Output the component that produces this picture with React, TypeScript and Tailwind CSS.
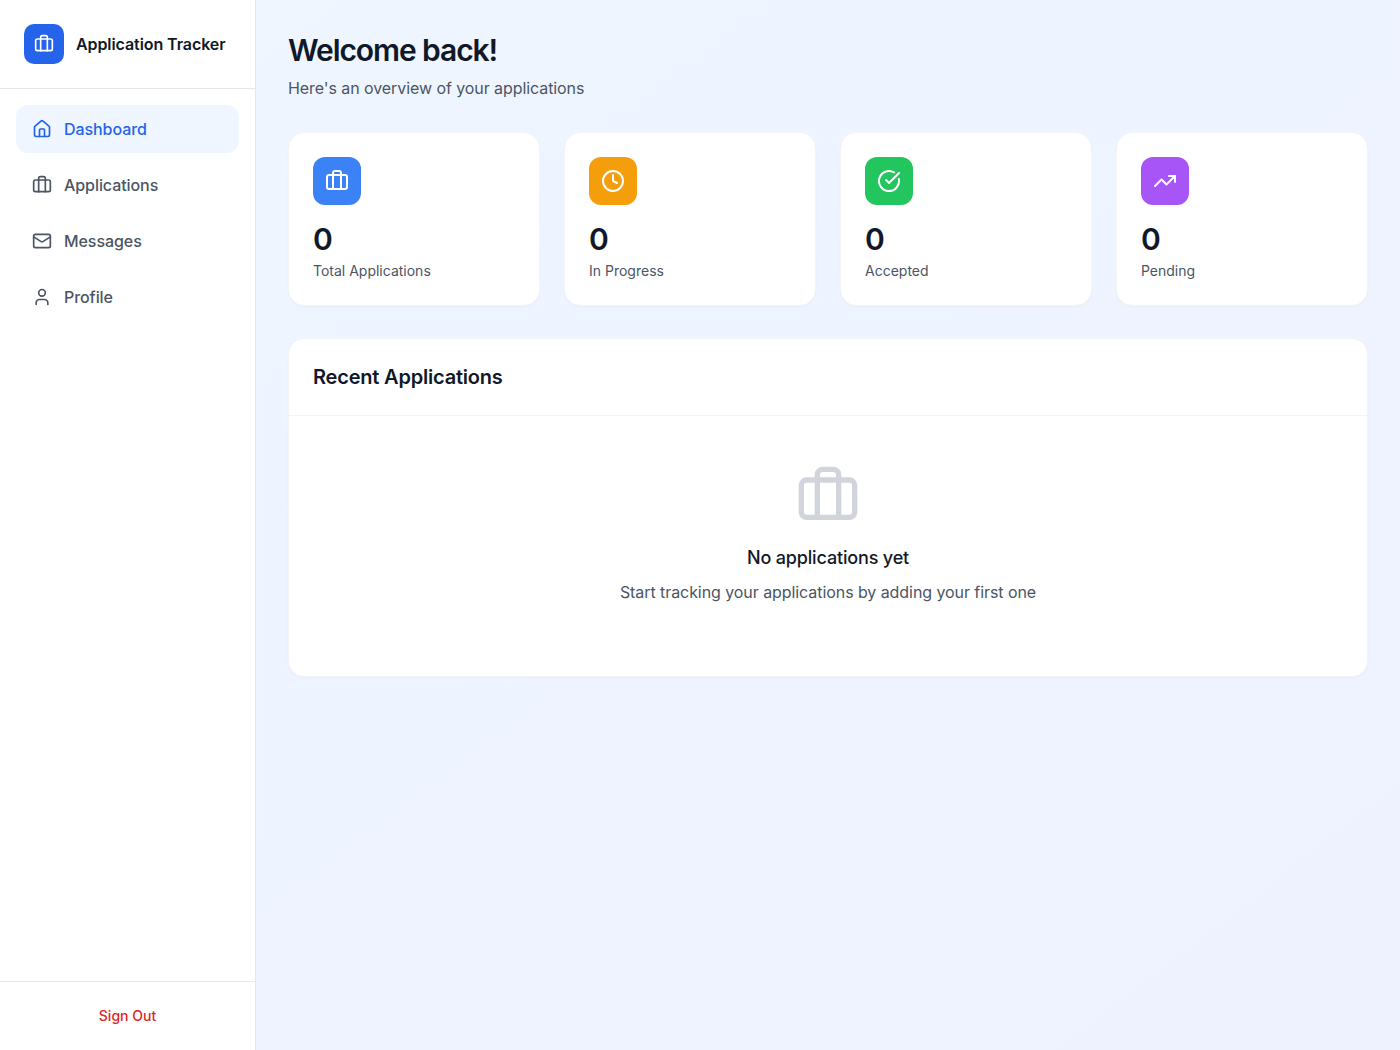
import { Briefcase, CheckCircle, Clock, Home, Mail, TrendingUp, User } from "lucide-react"

const nav = [
  { label: "Dashboard", icon: Home, active: true },
  { label: "Applications", icon: Briefcase },
  { label: "Messages", icon: Mail },
  { label: "Profile", icon: User },
]

const stats = [
  { label: "Total Applications", icon: Briefcase, color: "bg-[#3b82f6]" },
  { label: "In Progress", icon: Clock, color: "bg-[#f59e0b]" },
  { label: "Accepted", icon: CheckCircle, color: "bg-[#22c55e]" },
  { label: "Pending", icon: TrendingUp, color: "bg-[#a855f7]" },
]

export default function App() {
  return (
    <div className="flex h-[1050px] overflow-hidden bg-gradient-to-br from-[#eff6ff] to-[#eef2ff] font-['Inter',sans-serif] text-[#111827]">
      <aside className="flex w-64 shrink-0 flex-col border-r border-[#e5e7eb] bg-white">
        <div className="flex h-[89px] items-center gap-3 border-b border-[#e5e7eb] px-6">
          <div className="flex h-10 w-10 items-center justify-center rounded-[10px] bg-[#2563eb]">
            <Briefcase className="h-5 w-5 text-white" />
          </div>
          <span className="font-semibold tracking-[-0.08px]">Application Tracker</span>
        </div>
        <nav className="flex-1 space-y-2 p-4">
          {nav.map((item) => (
            <a
              key={item.label}
              className={`flex h-12 items-center gap-3 rounded-xl px-4 font-medium tracking-[-0.07px] ${item.active ? "bg-[#eff6ff] text-[#2563eb]" : "text-[#4b5563]"}`}
            >
              <item.icon className="h-5 w-5" />
              {item.label}
            </a>
          ))}
        </nav>
        <div className="flex h-[69px] items-center justify-center border-t border-[#e5e7eb]">
          <span className="text-sm font-medium text-[#dc2626]">Sign Out</span>
        </div>
      </aside>
      <main className="flex-1 px-8 pt-8">
        <h1 className="text-3xl font-semibold tracking-[-1.08px]">Welcome back!</h1>
        <p className="mt-2 tracking-[-0.075px] text-[#4b5563]">Here's an overview of your applications</p>
        <div className="mt-8 grid grid-cols-4 gap-6">
          {stats.map((s) => (
            <div key={s.label} className="rounded-2xl border border-[#f3f4f6] bg-white p-6 shadow-[0_1px_2px_rgba(0,0,0,0.03)]">
              <div className={`flex h-12 w-12 items-center justify-center rounded-xl ${s.color}`}>
                <s.icon className="h-6 w-6 text-white" />
              </div>
              <div className="mt-4 text-3xl font-semibold">0</div>
              <div className="mt-1 text-sm text-[#4b5563]">{s.label}</div>
            </div>
          ))}
        </div>
        <section className="mt-8 rounded-2xl border border-[#f3f4f6] bg-white shadow-[0_1px_2px_rgba(0,0,0,0.03)]">
          <div className="border-b border-[#f3f4f6] p-6">
            <h2 className="text-xl font-semibold tracking-[-0.2px]">Recent Applications</h2>
          </div>
          <div className="flex flex-col items-center px-6 py-12 pb-[72px]">
            <Briefcase className="h-16 w-16 text-[#d1d5db]" />
            <h3 className="mt-4 text-lg font-medium tracking-[-0.16px]">No applications yet</h3>
            <p className="mt-2 tracking-[-0.07px] text-[#4b5563]">Start tracking your applications by adding your first one</p>
          </div>
        </section>
      </main>
    </div>
  )
}
